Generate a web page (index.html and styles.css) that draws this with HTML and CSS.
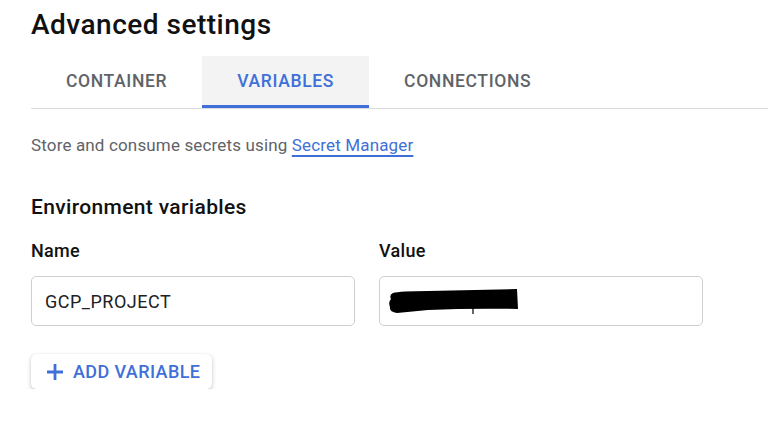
FILE: index.html
```html
<!DOCTYPE html>
<html>
<head>
<meta charset="utf-8">
<link rel="stylesheet" href="styles.css">
</head>
<body>
<div class="page">
  <h1 class="title">Advanced settings</h1>
  <div class="tabs">
    <div class="tab">CONTAINER</div>
    <div class="tab active">VARIABLES</div>
    <div class="tab">CONNECTIONS</div>
  </div>
  <p class="intro">Store and consume secrets using <a class="link" href="#">Secret Manager</a></p>
  <h2 class="section">Environment variables</h2>
  <div class="fields">
    <div class="field">
      <div class="label">Name</div>
      <div class="input">GCP_PROJECT</div>
    </div>
    <div class="field">
      <div class="label">Value</div>
      <div class="input">
        <svg class="redact" width="131" height="27" viewBox="0 0 131 27"><path d="M5 4 Q12 2 40 2 L129 0 L130 20 Q84 19 40 21 L9 24 Q1 23 2 18 Q0 13 3 10 Q1 6 5 4 Z" fill="#000"/><path d="M85 19 L85 25" stroke="#000" stroke-width="1.2"/></svg>
      </div>
    </div>
  </div>
  <button class="add">
    <svg class="plus" width="18" height="18" viewBox="0 0 18 18"><path d="M9 1v16M1 9h16" stroke="#3f6fd8" stroke-width="2.8" fill="none"/></svg>
    <span>ADD VARIABLE</span>
  </button>
</div>
</body>
</html>
```
FILE: styles.css
```css
html, body {
  margin: 0;
  padding: 0;
  background: #fff;
}
body {
  font-family: Roboto, "Liberation Sans", sans-serif;
  color: #202124;
}
.page {
  padding: 6px 0 0 31px;
}
.title {
  margin: 0;
  font-size: 28px;
  font-weight: 500;
  line-height: 38px;
  letter-spacing: 0.5px;
  color: #111;
}
.tabs {
  display: flex;
  margin-top: 12px;
  border-bottom: 1px solid #dadce0;
}
.tab {
  height: 49px;
  padding: 0 35px;
  display: flex;
  align-items: center;
  font-size: 17.5px;
  font-weight: 500;
  color: #5f6368;
  letter-spacing: 0.65px;
  border-bottom: 3px solid transparent;
}
.tab.active {
  background: #f3f3f3;
  color: #3f6fd8;
  border-bottom-color: #3f6fd8;
}
.intro {
  margin: 25px 0 0;
  font-size: 17px;
  line-height: 22px;
  letter-spacing: 0.15px;
  color: #5f6368;
}
.link {
  color: #3f6fd8;
  text-decoration: underline;
  text-decoration-thickness: 1.5px;
  text-underline-offset: 4px;
}
.section {
  margin: 38px 0 0;
  font-size: 21px;
  font-weight: 500;
  line-height: 26px;
  letter-spacing: 0.35px;
  color: #111;
}
.fields {
  display: flex;
  gap: 24px;
  margin-top: 20px;
}
.field {
  width: 324px;
}
.label {
  font-size: 18px;
  font-weight: 500;
  line-height: 22px;
  letter-spacing: 0.3px;
  color: #111;
}
.input {
  margin-top: 14px;
  border: 1px solid #cfcfcf;
  border-radius: 5px;
  box-sizing: border-box;
  height: 50px;
  display: flex;
  align-items: center;
  padding-left: 13px;
  font-size: 18px;
  letter-spacing: 0.5px;
  color: #202124;
}
.redact {
  display: block;
  margin-left: -5px;
  margin-top: 2px;
}
.add {
  margin-top: 28px;
  display: flex;
  align-items: center;
  gap: 9px;
  height: 35px;
  padding: 0 12px 0 15px;
  border: none;
  border-radius: 5px;
  background: #fff;
  box-shadow: 0 2px 4px rgba(0,0,0,0.22), 0 0 1px rgba(0,0,0,0.12);
  font-family: Roboto, "Liberation Sans", sans-serif;
  font-size: 18px;
  font-weight: 500;
  color: #3f6fd8;
  letter-spacing: 0.4px;
}
```
